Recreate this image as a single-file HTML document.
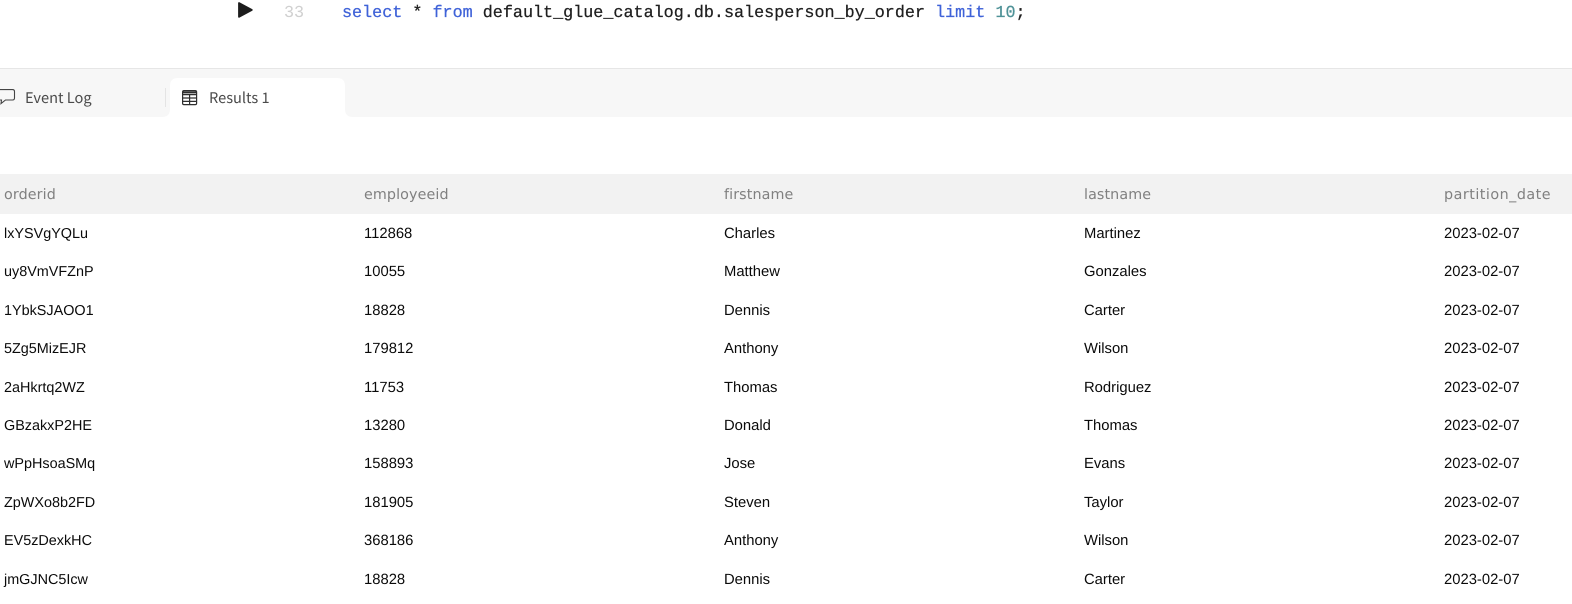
<!DOCTYPE html>
<html><head><meta charset="utf-8">
<style>
html,body{margin:0;padding:0;background:#fff}
#p{position:relative;width:1572px;height:604px;overflow:hidden;background:#fff;font-family:"Liberation Sans",sans-serif;text-rendering:geometricPrecision}
#p div{position:absolute;white-space:nowrap}
.code{font-family:"Liberation Mono",monospace;font-size:16.75px;line-height:24px;top:2px;left:342px;color:#1f1f1f;-webkit-text-stroke:.25px currentColor}
.k{color:#3f62d8}.n{color:#4f9297}
.hd{top:174px;left:0;width:1572px;height:40px;background:#f2f2f2}
.h{top:186px;font-family:"DejaVu Sans",sans-serif;font-size:14.3px;line-height:18px;color:#808080;letter-spacing:.1px}
.c{font-size:14.8px;line-height:18px;color:#0a0a0a}
.f{font-size:14.4px}
.tab{font-family:"Noto Sans CJK JP","Liberation Sans",sans-serif;font-size:14.6px;line-height:20px;color:#4a4a4a;top:88px}
</style></head><body><div id="p">
<svg style="position:absolute;left:236px;top:1px" width="18" height="18" viewBox="0 0 18 18"><path d="M3 2L15.8 8.9L3 15.8Z" fill="#1c1c1c" stroke="#1c1c1c" stroke-width="1.8" stroke-linejoin="round"/></svg>
<div style="left:284px;top:2px;font-family:'Liberation Mono',monospace;font-size:16.75px;line-height:24px;color:#d0d0d0">33</div>
<div class="code"><span class="k">select</span> * <span class="k">from</span> default_glue_catalog.db.salesperson_by_order <span class="k">limit</span> <span class="n">10</span>;</div>

<div style="left:0;top:68px;width:1572px;height:49px;background:#f7f7f7;border-top:1px solid #e6e6e6;box-sizing:border-box"></div>
<div style="left:165px;top:88px;width:1px;height:19px;background:#e4e4e4"></div>
<svg style="position:absolute;left:162px;top:77px" width="191" height="40" viewBox="0 0 191 40"><path d="M0 40Q8 40 8 32V9Q8 1 16 1H175Q183 1 183 9V32Q183 40 191 40Z" fill="#fff"/></svg>
<svg style="position:absolute;left:-2px;top:88px" width="18" height="18" viewBox="0 0 18 18" fill="none" stroke="#444" stroke-width="1.1"><path d="M0 1.6H14.5Q16.5 1.6 16.5 3.6V10Q16.5 12 14.5 12H7.5L3 15.6L3.5 12H0"/></svg>
<div class="tab" style="left:25px">Event Log</div>
<svg style="position:absolute;left:182px;top:90px" width="16" height="16" viewBox="0 0 16 16" fill="none" stroke="#2e2e2e" stroke-width="1.2"><rect x=".6" y=".6" width="14" height="14" rx="1.4"/><path d="M.6 4.6H14.6M.6 8H14.6M.6 11.4H14.6M7.6 4.6V14.6"/><path d="M.6 2.4H14.6" stroke-width="2"/></svg>
<div class="tab" style="left:209px">Results 1</div>

<div class="hd"></div>
<div class="h" style="left:4px">orderid</div>
<div class="h" style="left:364px">employeeid</div>
<div class="h" style="left:724px">firstname</div>
<div class="h" style="left:1084px">lastname</div>
<div class="h" style="left:1444px;letter-spacing:.5px">partition_date</div>

<div class="c f" style="left:4px;top:225px">lxYSVgYQLu</div><div class="c" style="left:364px;top:225px">112868</div><div class="c" style="left:724px;top:225px">Charles</div><div class="c" style="left:1084px;top:225px">Martinez</div><div class="c" style="left:1444px;top:225px">2023-02-07</div>
<div class="c f" style="left:4px;top:263px">uy8VmVFZnP</div><div class="c" style="left:364px;top:263px">10055</div><div class="c" style="left:724px;top:263px">Matthew</div><div class="c" style="left:1084px;top:263px">Gonzales</div><div class="c" style="left:1444px;top:263px">2023-02-07</div>
<div class="c f" style="left:4px;top:302px">1YbkSJAOO1</div><div class="c" style="left:364px;top:302px">18828</div><div class="c" style="left:724px;top:302px">Dennis</div><div class="c" style="left:1084px;top:302px">Carter</div><div class="c" style="left:1444px;top:302px">2023-02-07</div>
<div class="c f" style="left:4px;top:340px">5Zg5MizEJR</div><div class="c" style="left:364px;top:340px">179812</div><div class="c" style="left:724px;top:340px">Anthony</div><div class="c" style="left:1084px;top:340px">Wilson</div><div class="c" style="left:1444px;top:340px">2023-02-07</div>
<div class="c f" style="left:4px;top:379px">2aHkrtq2WZ</div><div class="c" style="left:364px;top:379px">11753</div><div class="c" style="left:724px;top:379px">Thomas</div><div class="c" style="left:1084px;top:379px">Rodriguez</div><div class="c" style="left:1444px;top:379px">2023-02-07</div>
<div class="c f" style="left:4px;top:417px">GBzakxP2HE</div><div class="c" style="left:364px;top:417px">13280</div><div class="c" style="left:724px;top:417px">Donald</div><div class="c" style="left:1084px;top:417px">Thomas</div><div class="c" style="left:1444px;top:417px">2023-02-07</div>
<div class="c f" style="left:4px;top:455px">wPpHsoaSMq</div><div class="c" style="left:364px;top:455px">158893</div><div class="c" style="left:724px;top:455px">Jose</div><div class="c" style="left:1084px;top:455px">Evans</div><div class="c" style="left:1444px;top:455px">2023-02-07</div>
<div class="c f" style="left:4px;top:494px">ZpWXo8b2FD</div><div class="c" style="left:364px;top:494px">181905</div><div class="c" style="left:724px;top:494px">Steven</div><div class="c" style="left:1084px;top:494px">Taylor</div><div class="c" style="left:1444px;top:494px">2023-02-07</div>
<div class="c f" style="left:4px;top:532px">EV5zDexkHC</div><div class="c" style="left:364px;top:532px">368186</div><div class="c" style="left:724px;top:532px">Anthony</div><div class="c" style="left:1084px;top:532px">Wilson</div><div class="c" style="left:1444px;top:532px">2023-02-07</div>
<div class="c f" style="left:4px;top:571px">jmGJNC5Icw</div><div class="c" style="left:364px;top:571px">18828</div><div class="c" style="left:724px;top:571px">Dennis</div><div class="c" style="left:1084px;top:571px">Carter</div><div class="c" style="left:1444px;top:571px">2023-02-07</div>
</div></body></html>
